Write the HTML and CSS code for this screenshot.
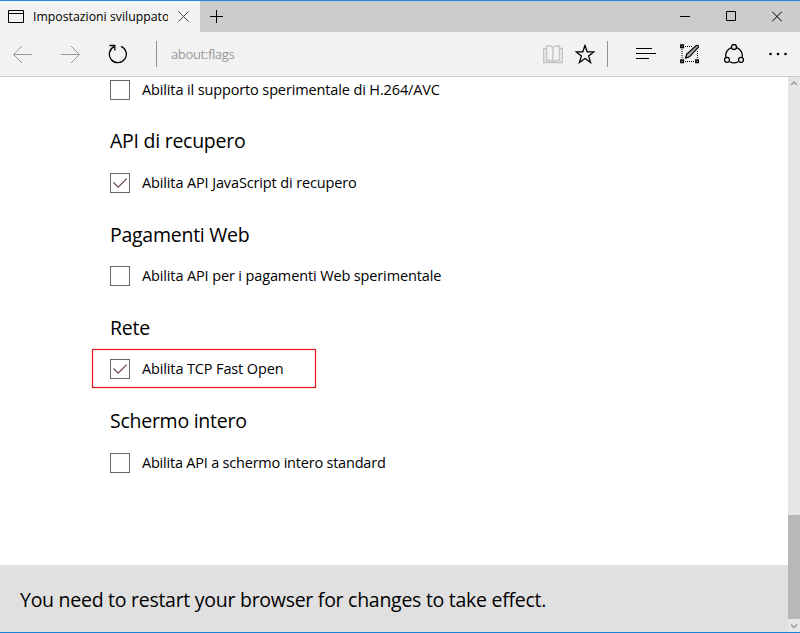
FILE: index.html
```html
<!DOCTYPE html>
<html lang="it">
<head>
  <meta charset="UTF-8">
  <title>Impostazioni sviluppatore</title>
  <link rel="stylesheet" href="styles.css">
</head>
<body>
  <div class="window">
    <div class="titlebar">
      <div class="tab">
        <svg class="tab-icon" width="16" height="14" viewBox="0 0 16 14"><path d="M.5.5h15v12H.5zM.5 3.5h15"/></svg>
        <span class="tab-title">Impostazioni sviluppato</span>
        <svg class="tab-close" width="11" height="11" viewBox="0 0 11 11"><path d="M.5.5l10 10M10.5.5l-10 10"/></svg>
      </div>
      <svg class="new-tab" width="13" height="13" viewBox="0 0 13 13"><path d="M6.5 0v13M0 6.5h13"/></svg>
      <div class="win-buttons">
        <svg width="10" height="11" viewBox="0 0 10 11"><path d="M0 5.5h10"/></svg>
        <svg width="10" height="11" viewBox="0 0 10 11"><path d="M.5.5h9v9h-9z"/></svg>
        <svg width="10" height="11" viewBox="0 0 10 11"><path d="M0 .5l10 10M10 .5l-10 10"/></svg>
      </div>
    </div>

    <div class="toolbar">
      <div class="nav">
        <svg class="dim" width="20" height="18" viewBox="0 0 20 18"><path d="M20 9.5H2M10 1L1.5 9.5 10 18"/></svg>
        <svg class="dim" width="20" height="18" viewBox="0 0 20 18"><path d="M1 9.5h18M11 1l8.5 8.5L11 18"/></svg>
        <svg class="reload" width="20" height="20" viewBox="0 0 20 20"><path d="M13 2.3A8.5 8.5 0 1 1 6 2.6M1.5 1.5h5.300v5"/></svg>
      </div>
      <div class="divider"></div>
      <div class="address">about:flags</div>
      <div class="page-tools">
        <svg class="book" width="20" height="19" viewBox="0 0 20 19"><path d="M3.5 2.5V1h4L10 2.5 12.5 1h4v14.5h-4L10 17l-2.5-1.5h-4zM3 3.5H.7v14h18.600v-14H17M10 2.5v15"/></svg>
        <svg class="star" width="20" height="20" viewBox="0 0 20 20"><path d="M10 1.5l2.2 6.3H19l-5.4 4.1 2 6.6-5.6-4-5.6 4 2-6.6L1 7.8h6.800z"/></svg>
      </div>
      <div class="divider"></div>
      <div class="app-tools">
        <svg class="hub" width="20" height="20" viewBox="0 0 20 20"><path d="M0 4.5h16M0 9.5h20M0 14.5h13"/></svg>
        <svg class="note" width="20" height="20" viewBox="0 0 20 20">
          <path class="dots" d="M5 2.5h8M2 5v10M5 17.5h10M17.5 7v8"/>
          <path class="corners" d="M.8 1h2.5v2.5H.8zM.8 16h2.5v2.5H.8zM15.8 16h2.5v2.5h-2.500z"/>
          <path class="pen" d="M5.5 14l1.3-4 9.5-8.500q1.300-.6 2 .3.5.8-.1 1.600L9.500 12.800z"/>
        </svg>
        <svg class="share" width="20" height="20" viewBox="0 0 20 20"><path d="M7.2 3.7A8.400 8.400 0 0 0 1.900 13.500M12.800 3.700a8.400 8.400 0 0 1 5.300 9.800M5.700 17.800q4.300 2.300 8.600 0"/><circle cx="10" cy="3" r="2.5"/><circle cx="3" cy="15.8" r="2.5"/><circle cx="17" cy="15.8" r="2.5"/></svg>
        <svg class="more" width="20" height="20" viewBox="0 0 20 20"><circle cx="2.500" cy="10" r="1.300"/><circle cx="10" cy="10" r="1.300"/><circle cx="17.500" cy="10" r="1.300"/></svg>
      </div>
    </div>

    <div class="main">
      <div class="page">
        <div class="flags">
          <div class="flag"><span class="check"></span><span class="label">Abilita il supporto sperimentale di H.264/AVC</span></div>

          <h2>API di recupero</h2>
          <div class="flag"><span class="check"><svg width="18" height="18" viewBox="0 0 18 18"><path d="M2.5 8.5l4.7 4.7 8.500-8.500"/></svg></span><span class="label">Abilita API JavaScript di recupero</span></div>

          <h2>Pagamenti Web</h2>
          <div class="flag"><span class="check"></span><span class="label">Abilita API per i pagamenti Web sperimentale</span></div>

          <h2>Rete</h2>
          <div class="flag highlighted"><span class="check"><svg width="18" height="18" viewBox="0 0 18 18"><path d="M2.5 8.5l4.7 4.7 8.500-8.500"/></svg></span><span class="label">Abilita TCP Fast Open</span></div>

          <h2>Schermo intero</h2>
          <div class="flag"><span class="check"></span><span class="label tight">Abilita API a schermo intero standard</span></div>
        </div>
        <div class="restart">You need to restart your browser for changes to take effect.</div>
      </div>
      <div class="scrollbar">
        <svg width="12" height="12" viewBox="0 0 12 12"><path d="M3 8l3-3 3 3"/></svg>
        <div class="track"><div class="thumb"></div></div>
        <svg width="12" height="13" viewBox="0 0 12 13"><path d="M3 5.5l3 3 3-3"/></svg>
      </div>
    </div>
  </div>
</body>
</html>
```
FILE: styles.css
```css
*, *::before {
  box-sizing: border-box;
}
body {
  margin: 0;
  font-family: "Open Sans", "Noto Sans", sans-serif;
  color: #000;
}
svg {
  display: block;
  flex: none;
  fill: none;
  stroke: #000;
}
.window {
  display: flex;
  flex-direction: column;
  width: 800px;
  height: 633px;
  border-top: 1px solid #2b88d8;
  border-bottom: 1px solid #1883d7;
  overflow: hidden;
}

/* tabs */
.titlebar {
  display: flex;
  align-items: center;
  height: 31px;
  background: #ccc;
}
.tab {
  display: flex;
  align-items: center;
  width: 200px;
  height: 31px;
  padding-left: 8px;
  background: #f2f2f2;
}
.tab-title {
  width: 135px;
  margin-left: 9px;
  font-size: 12.3px;
  line-height: 18px;
  white-space: nowrap;
  overflow: hidden;
}
.tab-close {
  margin-left: 10px;
  stroke: #444;
}
.new-tab {
  margin-left: 10px;
}
.win-buttons {
  display: flex;
  gap: 36px;
  margin-left: auto;
  margin-right: 18px;
}

/* toolbar */
.toolbar {
  display: flex;
  align-items: center;
  height: 45px;
  background: #f2f2f2;
  border-bottom: 1px solid #ccc;
}
.nav {
  display: flex;
  align-items: center;
  gap: 28px;
  width: 156px;
  padding-left: 12px;
}
.dim {
  stroke: #999;
}
.reload {
  stroke-width: 1.3;
}
.divider {
  width: 1px;
  height: 26px;
  background: #919191;
}
.address {
  width: 386px;
  padding-left: 14px;
  font-size: 13px;
  letter-spacing: -0.35px;
  color: #999;
}
.page-tools {
  display: flex;
  align-items: center;
  gap: 12px;
  width: 64px;
}
.book {
  stroke: #c4c4c4;
  stroke-width: 1.4;
}
.star {
  stroke-width: 1.3;
}
.app-tools {
  display: flex;
  align-items: center;
  gap: 24px;
  padding-left: 28px;
}
.hub {
  stroke-width: 1.2;
}
.dots {
  stroke-dasharray: 1 1;
}
.corners {
  stroke-width: 1.4;
}
.pen {
  fill: #aaa;
  stroke-width: 1.2;
}
.share {
  stroke-width: 1.3;
}
.more {
  fill: #000;
  stroke: none;
}

/* page */
.main {
  display: flex;
  flex: 1;
}
.page {
  display: flex;
  flex-direction: column;
  width: 788px;
}
.flags {
  flex: 1;
  padding: 3px 0 0 110px;
}
.flag {
  display: flex;
  align-items: center;
  gap: 12px;
  position: relative;
  height: 20px;
}
.check {
  width: 20px;
  height: 20px;
  border: 1px solid #666;
}
.check svg {
  stroke: #6a4444;
  stroke-width: 1.2;
}
.label {
  font-size: 14.5px;
  line-height: 20px;
  letter-spacing: -0.13px;
  white-space: nowrap;
}
.tight {
  letter-spacing: -0.21px;
}
h2 {
  margin: 28.4px 0 19.75px;
  font-size: 19.5px;
  font-weight: 400;
  line-height: 25px;
  letter-spacing: -0.26px;
}
.highlighted::before {
  content: "";
  position: absolute;
  left: -18px;
  top: -10px;
  width: 224px;
  height: 39px;
  border: 1px solid #f01018;
  box-shadow: 0 0 1px #f66, inset 0 0 1px #f66;
}
.restart {
  height: 67px;
  padding-left: 20px;
  background: #e0e0e0;
  font-size: 19.5px;
  line-height: 70px;
  letter-spacing: -0.27px;
  white-space: nowrap;
}

.scrollbar {
  display: flex;
  flex-direction: column;
  width: 12px;
  background: #e6e6e6;
}
.scrollbar svg {
  stroke: #999;
  stroke-width: 1.4;
}
.track {
  display: flex;
  flex: 1;
  align-items: flex-end;
}
.thumb {
  width: 12px;
  height: 104px;
  background: #b8b8b8;
}
```
